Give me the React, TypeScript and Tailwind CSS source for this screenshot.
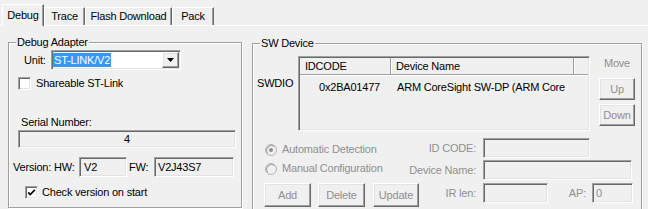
const sunken =
  'border border-t-[#a0a0a0] border-l-[#a0a0a0] border-b-white border-r-white shadow-[inset_1px_1px_0_#696969,inset_-1px_-1px_0_#e3e3e3]';
const raised =
  'border border-t-white border-l-white border-b-[#696969] border-r-[#696969] shadow-[inset_-1px_-1px_0_#a0a0a0,inset_1px_1px_0_#e3e3e3]';
const dim = 'text-[#8f8f8f]';

function Tab({ label, width, active }: { label: string; width: string; active?: boolean }) {
  return (
    <div
      className={
        active
          ? `${width} relative z-10 -mb-px h-[22px] flex items-center justify-center pb-[1px] bg-[#f0f0f0] border-t border-l border-white border-r border-r-[#696969] shadow-[inset_-1px_0_0_#a0a0a0]`
          : `${width} h-[18px] flex items-center justify-center bg-[#f0f0f0] border-t border-l border-white border-r border-r-[#696969] shadow-[inset_-1px_0_0_#a0a0a0]`
      }
    >
      {label}
    </div>
  );
}

function CheckBox({ checked }: { checked?: boolean }) {
  return (
    <span className="w-[13px] h-[13px] shrink-0 bg-white flex items-center justify-center border border-t-[#a0a0a0] border-l-[#a0a0a0] border-b-white border-r-white shadow-[inset_1px_1px_0_#696969,inset_-1px_-1px_0_#e3e3e3]">
      {checked && (
        <svg width="9" height="9" viewBox="0 0 9 9">
          <polyline points="1.2,4.3 3.3,6.5 7.8,1.8" fill="none" stroke="#000" strokeWidth="1.7" />
        </svg>
      )}
    </span>
  );
}

function Radio({ selected }: { selected?: boolean }) {
  return (
    <svg width="12" height="12" viewBox="0 0 12 12" className="shrink-0">
      <circle cx="6" cy="6" r="5.5" fill="#f0f0f0" stroke="#b4b4b4" />
      <path d="M2.5 9.5 A5 5 0 0 1 9.5 2.5" fill="none" stroke="#9a9a9a" />
      {selected && <circle cx="6" cy="6" r="2" fill="#8f8f8f" />}
    </svg>
  );
}

function Button({ label, width }: { label: string; width: string }) {
  return (
    <div className={`${width} h-[24px] shrink-0 flex items-center justify-center ${raised} ${dim}`}>
      {label}
    </div>
  );
}

export default function App() {
  return (
    <div className="w-[648px] h-[209px] overflow-hidden bg-[#f0f0f0] text-black text-[11px] leading-[13px] tracking-[-0.2px] font-['Liberation_Sans',Arial,sans-serif]">
      {/* tabs */}
      <div className="flex items-end h-[26px] pl-[2px] border-b border-white">
        <Tab label="Debug" width="w-[42px]" active />
        <Tab label="Trace" width="w-[41px]" />
        <Tab label="Flash Download" width="w-[87px]" />
        <Tab label="Pack" width="w-[42px]" />
      </div>

      <div className="flex items-start pl-[8px] pt-[16px]">
        {/* Debug Adapter */}
        <div className="relative w-[234px] h-[166px] shrink-0 border border-[#a0a0a0] shadow-[inset_1px_1px_0_#fff,1px_1px_0_#fff]">
          <span className="absolute left-[7px] -top-[7px] px-[1px] bg-[#f0f0f0]">Debug Adapter</span>

          <div className="flex items-center pl-[15px] pt-[7px]">
            <span className="w-[27px]">Unit:</span>
            <div className={`w-[130px] h-[20px] flex items-center bg-white ${sunken}`}>
              <span className="ml-[1px] h-[14px] px-[1px] flex items-center bg-[#3399ff] text-white">ST-LINK/V2</span>
              <div className={`ml-auto mr-[1px] w-[17px] h-[16px] flex items-center justify-center bg-[#f0f0f0] ${raised}`}>
                <svg width="7" height="4" viewBox="0 0 7 4">
                  <polygon points="0,0 7,0 3.5,4" fill="#000" />
                </svg>
              </div>
            </div>
          </div>

          <div className="flex items-center pl-[9px] mt-[7px]">
            <CheckBox />
            <span className="ml-[5px]">Shareable ST-Link</span>
          </div>

          <div className="pl-[12px] mt-[26px]">Serial Number:</div>
          <div className={`ml-[9px] mt-[1px] w-[218px] h-[18px] flex items-center justify-center ${sunken}`}>4</div>

          <div className="flex items-center pl-[4px] mt-[9px]">
            <span className="w-[66px] whitespace-nowrap">Version: HW:</span>
            <div className={`w-[48px] h-[20px] flex items-center pl-[4px] ${sunken}`}>V2</div>
            <span className="w-[27px] pl-[2px]">FW:</span>
            <div className={`w-[80px] h-[20px] flex items-center pl-[3px] ${sunken}`}>V2J43S7</div>
          </div>

          <div className="flex items-center pl-[16px] mt-[9px]">
            <CheckBox checked />
            <span className="ml-[4px]">Check version on start</span>
          </div>
        </div>

        {/* SW Device */}
        <div className="relative ml-[10px] mt-[1px] w-[390px] h-[180px] shrink-0 border border-[#a0a0a0] shadow-[inset_1px_1px_0_#fff,1px_1px_0_#fff]">
          <span className="absolute left-[7px] -top-[7px] px-[1px] bg-[#f0f0f0]">SW Device</span>

          <div className="flex items-start pl-[4px] mt-[12px]">
            <span className="w-[41px] mt-[21px]">SWDIO</span>
            <div className={`w-[292px] h-[75px] bg-[#f0f0f0] ${sunken} p-[1px]`}>
              <div className="flex h-[17px] border-b border-[#a0a0a0] shadow-[0_1px_0_#fff]">
                <div className="w-[91px] pl-[5px] flex items-center border-r border-[#a0a0a0] shadow-[1px_0_0_#fff]">IDCODE</div>
                <div className="w-[183px] pl-[5px] flex items-center border-r border-[#a0a0a0] shadow-[1px_0_0_#fff]">Device Name</div>
              </div>
              <div className="flex mt-[6px] whitespace-nowrap">
                <span className="w-[92px] pl-[19px]">0x2BA01477</span>
                <span className="pl-[5px]">ARM CoreSight SW-DP (ARM Core</span>
              </div>
            </div>
            <div className={`ml-[9px] w-[36px] flex flex-col items-center ${dim}`}>
              <span className="mt-[1px]">Move</span>
              <div className={`mt-[8px] w-[36px] h-[22px] flex items-center justify-center ${raised}`}>Up</div>
              <div className={`mt-[4px] w-[36px] h-[22px] flex items-center justify-center ${raised}`}>Down</div>
            </div>
          </div>

          <div className="flex items-start">
            <div className={`w-[150px] pl-[12px] pt-[12px] ${dim}`}>
              <div className="flex items-center h-[13px]">
                <Radio selected />
                <span className="ml-[5px] whitespace-nowrap">Automatic Detection</span>
              </div>
              <div className="flex items-center h-[13px] mt-[6px]">
                <Radio />
                <span className="ml-[5px] whitespace-nowrap">Manual Configuration</span>
              </div>
            </div>
            <div className={`pt-[7px] flex flex-col gap-[2px] ${dim}`}>
              <div className="flex items-center">
                <span className="w-[73px] text-right whitespace-nowrap">ID CODE:</span>
                <div className={`ml-[7px] w-[107px] h-[20px] ${sunken}`} />
              </div>
              <div className="flex items-center">
                <span className="w-[73px] text-right whitespace-nowrap">Device Name:</span>
                <div className={`ml-[7px] w-[149px] h-[20px] ${sunken}`} />
              </div>
            </div>
          </div>

          <div className="flex items-start pl-[11px] mt-[3px]">
            <Button label="Add" width="w-[47px]" />
            <div className="ml-[7px]">
              <Button label="Delete" width="w-[47px]" />
            </div>
            <div className="ml-[8px]">
              <Button label="Update" width="w-[46px]" />
            </div>
            <div className={`flex items-center ${dim}`}>
              <span className="w-[57px] text-right">IR len:</span>
              <div className={`ml-[7px] w-[65px] h-[20px] ${sunken}`} />
              <span className="w-[38px] text-right">AP:</span>
              <div className={`ml-[6px] w-[41px] h-[20px] flex items-center pl-[3px] ${sunken}`}>0</div>
            </div>
          </div>
        </div>
      </div>
    </div>
  );
}
